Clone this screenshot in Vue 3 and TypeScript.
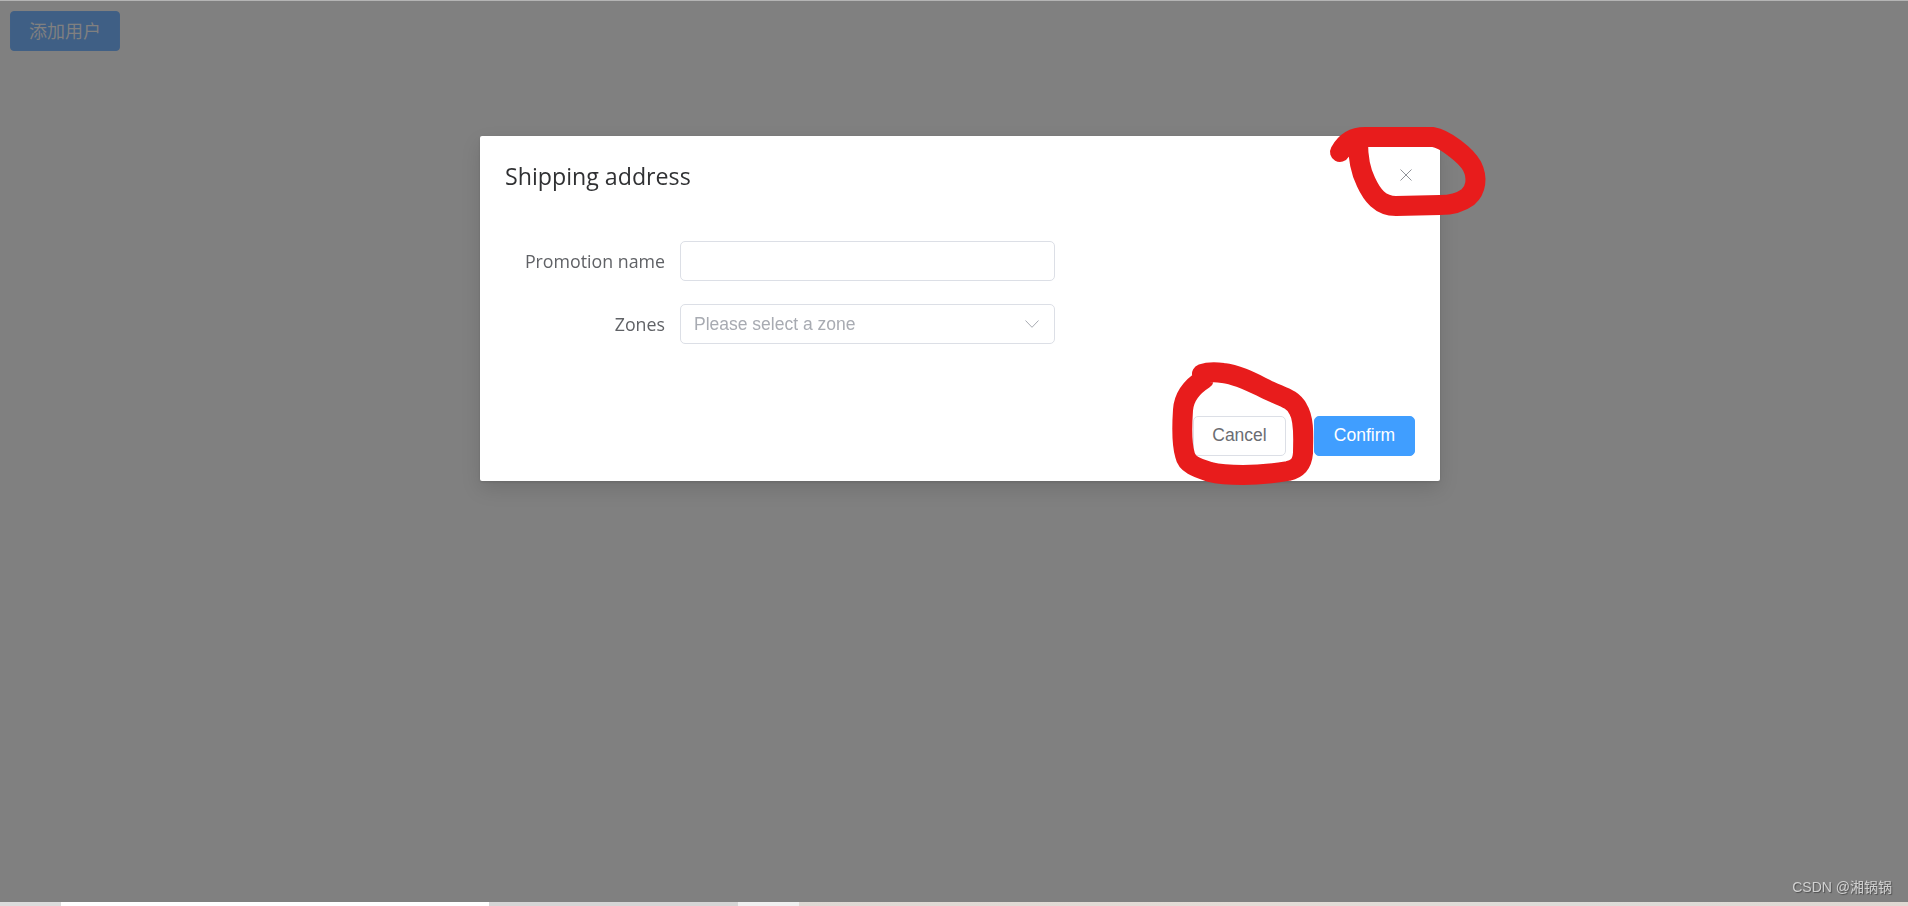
<script setup lang="ts">
import { ref } from 'vue';

const promotion = ref('');

const chromeStrip = [
  { w: 61, bg: '#dcdcdc' },
  { w: 428, bg: '#ffffff' },
  { w: 249, bg: '#d5d5d5' },
  { w: 61, bg: '#f0f0f0' },
  { w: 1109, bg: 'linear-gradient(90deg, #ded8d3, #e4dcd6 40%, #dddcd8 70%, #e0d8d2)' },
];
</script>

<template>
  <div class="page">
    <div class="content">
      <button class="add-btn" type="button">添加用户</button>
    </div>
    <div class="strip">
      <span v-for="(s, i) in chromeStrip" :key="i" :style="{ width: s.w + 'px', background: s.bg }"></span>
    </div>

    <div class="mask">
      <div class="dialog">
        <header class="dialog-header">
          <span class="dialog-title">Shipping address</span>
          <svg class="close-icon" viewBox="0 0 12 12" width="12" height="12">
            <path d="M0.5 0.5 L11.5 11.5 M11.5 0.5 L0.5 11.5" stroke="#909399" stroke-width="1" fill="none" />
          </svg>
        </header>
        <div class="dialog-body">
          <div class="form-row">
            <label>Promotion name</label>
            <input v-model="promotion" type="text" />
          </div>
          <div class="form-row">
            <label>Zones</label>
            <div class="select">
              <span>Please select a zone</span>
              <svg viewBox="0 0 14 8" width="14" height="8">
                <path d="M0.5 0.5 L7 7.3 L13.5 0.5" stroke="#a8abb2" stroke-width="1" fill="none" />
              </svg>
            </div>
          </div>
        </div>
        <footer class="dialog-footer">
          <button class="btn" type="button">Cancel</button>
          <button class="btn primary" type="button">Confirm</button>
        </footer>
      </div>
    </div>

    <span class="watermark">CSDN @湘锅锅</span>

    <svg class="marks" viewBox="0 0 1908 906" width="1908" height="906">
      <path d="M1340 152 C1345 143 1352 137 1365 137 L1433 137 C1445 139 1466 155 1472 166 C1478 178 1476 190 1468 197 C1460 203 1450 205 1440 205 L1396 206 C1380 206 1372 195 1366 182 C1360 170 1358 155 1358 142" />
      <path d="M1202 374 C1208 372 1216 372 1223 373 C1240 375 1255 384 1270 391 C1283 397 1293 399 1298 409 C1305 420 1303 440 1303 453 C1302 465 1297 469 1288 471 C1270 474 1255 475 1243 475 C1230 475 1218 474 1210 472 C1198 468 1187 465 1185 455 C1182 445 1182 425 1183 410 C1184 395 1193 386 1204 379" />
    </svg>
  </div>
</template>

<style>
html, body {
  margin: 0;
  background: #808080;
  overflow: hidden;
}
</style>

<style scoped>
.page {
  position: relative;
  display: flex;
  flex-direction: column;
  height: 100vh;
  background: #808080;
  border-top: 1px solid #b4b4b4;
  box-sizing: border-box;
}

.content {
  flex: 1;
  padding: 10px;
}

.add-btn {
  display: block;
  width: 110px;
  height: 40px;
  background: #3f5f85;
  border: 1px solid #416085;
  border-radius: 4px;
  color: #808080;
  font-family: "Noto Sans CJK SC", sans-serif;
  font-size: 18px;
  padding: 0 0 2px;
}

.strip {
  display: flex;
  height: 4px;
}

.mask {
  position: fixed;
  inset: 0;
  padding: 136px 0 0 480px;
}

.dialog {
  width: 960px;
  height: 345px;
  background: #fff;
  border-radius: 2px;
  box-shadow: 0 1px 3px rgba(0, 0, 0, 0.12), 0 8px 20px rgba(0, 0, 0, 0.12);
  display: flex;
  flex-direction: column;
  box-sizing: border-box;
  padding: 0 25px;
}

.dialog-header {
  display: flex;
  justify-content: space-between;
  align-items: center;
  height: 105px;
  padding-bottom: 26px;
  box-sizing: border-box;
}

.dialog-title {
  font-family: "Open Sans", sans-serif;
  font-size: 23.2px;
  color: #303133;
}

.close-icon {
  margin-right: 3px;
  margin-top: -2px;
}

.dialog-body {
  display: flex;
  flex-direction: column;
  gap: 23px;
}

.form-row {
  display: flex;
  align-items: center;
  gap: 15px;
}

label {
  width: 160px;
  text-align: right;
  font-family: "Open Sans", sans-serif;
  font-size: 17.8px;
  color: #606266;
}

input, .select {
  width: 375px;
  height: 40px;
  box-sizing: border-box;
  border: 1px solid #dcdfe6;
  border-radius: 5px;
  background: #fff;
  outline: none;
}

.select {
  display: flex;
  align-items: center;
  justify-content: space-between;
  padding: 0 15px 0 13px;
  font-family: "Liberation Sans", Arial, sans-serif;
  font-size: 17.5px;
  color: #a8abb2;
}

.dialog-footer {
  display: flex;
  justify-content: flex-end;
  gap: 28px;
  margin-top: 72px;
}

.btn {
  width: 93px;
  height: 40px;
  box-sizing: border-box;
  border: 1px solid #dcdfe6;
  border-radius: 5px;
  background: #fff;
  color: #6b6d72;
  font-family: "Liberation Sans", Arial, sans-serif;
  font-size: 17.5px;
  padding: 0 0 1px;
}

.btn.primary {
  width: 101px;
  background: #409eff;
  border-color: #409eff;
  color: #fff;
}

.watermark {
  position: absolute;
  right: 16px;
  bottom: 10px;
  font-family: "Liberation Sans", "Noto Sans CJK SC", sans-serif;
  font-size: 14px;
  color: #d0d0d0;
  text-shadow: 1px 1px 1px rgba(0, 0, 0, 0.4);
}

.marks {
  position: absolute;
  top: -1px;
  left: 0;
  pointer-events: none;
}

.marks path {
  fill: none;
  stroke: #e81c1c;
  stroke-width: 20;
  stroke-linecap: round;
  stroke-linejoin: round;
}
</style>
